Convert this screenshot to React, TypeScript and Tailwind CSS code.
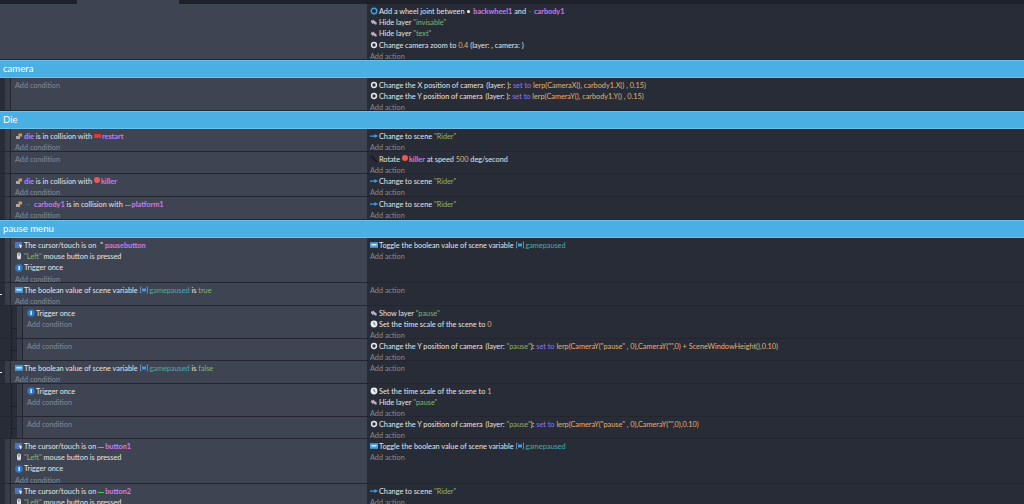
import type { ReactNode } from 'react';

const Obj = ({ children }: { children: ReactNode }) => <span className="font-bold text-[#cb7ce8]">{children}</span>;
const Str = ({ children }: { children: ReactNode }) => <span className="text-[#86b56c]">{children}</span>;
const Num = ({ children }: { children: ReactNode }) => <span className="text-[#e2b271]">{children}</span>;
const Op = ({ children }: { children: ReactNode }) => <span className="text-[#9c74e6]">{children}</span>;
const Var = ({ children }: { children: ReactNode }) => <span className="text-[#4aa9b8]">{children}</span>;

type IconName = 'wheel' | 'layer' | 'camera' | 'scene' | 'rotate' | 'collide' | 'cursor' | 'mouse' | 'once' | 'bool' | 'time';

function Icon({ name }: { name: IconName }) {
    const box = 'inline-block align-[-1.5px] mr-[1px] w-2 h-2 shrink-0';
    switch (name) {
        case 'wheel':
            return <svg className={box} viewBox="0 0 8 8"><circle cx="4" cy="4" r="2.8" fill="none" stroke="#3f9fe0" strokeWidth="1.4" /></svg>;
        case 'layer':
            return <svg className={box} viewBox="0 0 8 8"><path d="M1 2l3 3-1 1-2-2z" fill="#e6c68a" /><path d="M3 1.5l4 3.5-2 1.5-3-3.5z" fill="#c9a6e8" /><path d="M4 5l3 .5-1 1.5z" fill="#7fc0ea" /></svg>;
        case 'camera':
            return <svg className={box} viewBox="0 0 8 8"><circle cx="4" cy="4" r="2.4" fill="none" stroke="#e6e8ec" strokeWidth="1.5" /><circle cx="4" cy="4" r=".8" fill="#444" /></svg>;
        case 'scene':
            return <svg className={box} viewBox="0 0 8 8"><path d="M0 3.4h4.5V2L8 4 4.5 6V4.7H0z" fill="#3f9be8" /></svg>;
        case 'rotate':
            return <svg className={box} viewBox="0 0 8 8"><path d="M1 1l6 6" stroke="#11141a" strokeWidth="1.3" /></svg>;
        case 'collide':
            return <svg className={box} viewBox="0 0 8 8"><rect x="1" y="4" width="4" height="3" fill="#a9a9a9" /><rect x="3.5" y="1.5" width="3.5" height="3" fill="#d49a4c" /></svg>;
        case 'cursor':
            return <svg className={box} viewBox="0 0 8 8"><rect x="0" y="1" width="7" height="6" fill="#4a78c0" /><path d="M4 3l3.5 2-1.5.5L5.5 7.5z" fill="#fff" /></svg>;
        case 'mouse':
            return <svg className={box} viewBox="0 0 8 8"><rect x="2" y="0.5" width="4" height="7" rx="1.8" fill="#d5d7da" /><rect x="3.5" y="1.5" width="1" height="2" fill="#555" /></svg>;
        case 'once':
            return <svg className={box} viewBox="0 0 8 8"><circle cx="4" cy="4" r="3.8" fill="#2f78c4" /><rect x="3.5" y="2" width="1.3" height="4" fill="#fff" /></svg>;
        case 'bool':
            return <svg className={box} viewBox="0 0 8 8"><rect x="0" y="1.2" width="8" height="5.6" fill="#4a9fe0" /><rect x="1.5" y="3" width="5" height="1.5" fill="#d5ecfa" /></svg>;
        case 'time':
            return <svg className={box} viewBox="0 0 8 8"><circle cx="4" cy="4" r="3.4" fill="#eceef0" /><path d="M4 2v2l1.5 1" stroke="#444" strokeWidth=".8" fill="none" /></svg>;
    }
}

const Sprite = ({ className }: { className: string }) => <span className={`inline-block align-[1px] ${className}`} />;

function VarIcon() {
    return (
        <svg className="inline-block align-[-1.5px] mx-[1px] w-2 h-2" viewBox="0 0 8 8">
            <path d="M1.5 1H.5v6h1M6.5 1h1v6h-1" stroke="#7fa8cc" strokeWidth=".7" fill="none" />
            <rect x="2" y="2.5" width="4" height="3" fill="#3f9be8" />
        </svg>
    );
}

function Line({ icon, children }: { icon: IconName; children: ReactNode }) {
    return (
        <div className="h-[11.4px] whitespace-nowrap text-[#e2e4e8]">
            <Icon name={icon} />
            {children}
        </div>
    );
}

const AddLine = ({ label }: { label: string }) => <div className="h-[11px] whitespace-nowrap text-[#858a95]">{label}</div>;

function EventRow({ h, depth = 0, conditions, actions, top = false, tick = false }: {
    h: number;
    depth?: 0 | 1;
    conditions?: ReactNode;
    actions?: ReactNode;
    top?: boolean;
    tick?: boolean;
}) {
    return (
        <div className="flex border-b border-[#23262e]" style={{ height: h }}>
            {top ? (
                <div className="w-[367px] shrink-0 bg-[#3f4452]" />
            ) : (
                <div className="w-[367px] shrink-0 flex bg-[#282c36]">
                    <div className={depth ? 'w-[17px] shrink-0 relative' : 'w-[5px] shrink-0 relative'}>
                        {tick && <div className="absolute left-0 top-[11px] w-[2px] h-px bg-white" />}
                        {depth === 1 && (
                            <>
                                <div className="absolute left-[11px] top-0 bottom-0 w-px bg-[#1c1f26]" />
                                <div className="absolute left-[11px] right-0 bottom-[9px] h-px bg-[#1c1f26]" />
                            </>
                        )}
                    </div>
                    <div className="w-[6px] shrink-0 bg-[#383d4a] border-r border-[#23262e]" />
                    <div className="flex-1 bg-[#3f4452] pl-[4px] pt-[1.5px]">
                        {conditions}
                        <AddLine label="Add condition" />
                    </div>
                </div>
            )}
            <div className="flex-1 bg-[#282c36] pl-[3px] pt-[1.5px]">
                {actions}
                <AddLine label="Add action" />
            </div>
        </div>
    );
}

const Group = ({ title }: { title: string }) => (
    <div className="h-[18px] bg-[#4ab0e4] border-y border-[#6cc2ec] pl-[3px] text-[9.6px] leading-[16px] text-white">{title}</div>
);

const Collide = ({ first, rest }: { first: ReactNode; rest: ReactNode }) => (
    <Line icon="collide">{first} is in collision with {rest}</Line>
);

const Mouse = () => <Line icon="mouse"><Str>"Left"</Str> mouse button is pressed</Line>;
const Once = () => <Line icon="once">Trigger once</Line>;
const Toggle = () => <Line icon="bool">Toggle the boolean value of scene variable <VarIcon /><Var>gamepaused</Var></Line>;
const Rider = () => <Line icon="scene">Change to scene <Str>"Rider"</Str></Line>;
const Bool = ({ value }: { value: string }) => (
    <Line icon="bool">The boolean value of scene variable <VarIcon /><Var>gamepaused</Var> is <Str>{value}</Str></Line>
);
const Cursor = ({ sprite, name }: { sprite: ReactNode; name: string }) => (
    <Line icon="cursor">The cursor/touch is on {sprite}<Obj>{name}</Obj></Line>
);

const greenBar = <Sprite className="w-[6px] h-px bg-[#4cc85a] mr-[1px]" />;
const redBall = <Sprite className="w-[6px] h-[6px] rounded-full bg-[#f0574e] mr-[1px] align-[-0.5px]" />;

export default function App() {
    return (
        <div className="w-[1024px] h-[504px] overflow-hidden bg-[#282c36] text-[7.3px] leading-[11.4px]" style={{ fontFamily: '"Lato", "Noto Sans", sans-serif' }}>
            <div className="h-[4px] flex bg-[#1e2129]">
                <div className="ml-[77px] w-[102px] bg-[#3f4452]" />
            </div>
            <EventRow
                top
                h={56}
                actions={
                    <>
                        <Line icon="wheel">Add a wheel joint between <Sprite className="w-[3px] h-[3px] rounded-full bg-white mx-[1px]" /> <Obj>backwheel1</Obj> and <span className="text-[#3f6f8a]">~</span> <Obj>carbody1</Obj></Line>
                        <Line icon="layer">Hide layer <Str>"invisable"</Str></Line>
                        <Line icon="layer">Hide layer <Str>"text"</Str></Line>
                        <Line icon="camera">Change camera zoom to <Num>0.4</Num> (layer: , camera: )</Line>
                    </>
                }
            />
            <Group title="camera" />
            <EventRow
                h={33}
                actions={
                    <>
                        <Line icon="camera">Change the X position of camera <span className="ml-[1px]">(layer: ):</span> <Op>set to</Op> <Num>lerp(CameraX(), carbody1.X() , 0.15)</Num></Line>
                        <Line icon="camera">Change the Y position of camera <span className="ml-[1px]">(layer: ):</span> <Op>set to</Op> <Num>lerp(CameraY(), carbody1.Y() , 0.15)</Num></Line>
                    </>
                }
            />
            <Group title="Die" />
            <EventRow h={23} conditions={<Collide first={<Obj>die</Obj>} rest={<><Sprite className="w-[7px] h-[4px] bg-[#d83a34] mr-[1px]" /><Obj>restart</Obj></>} />} actions={<Rider />} />
            <EventRow h={22} actions={<Line icon="rotate">Rotate {redBall}<Obj>killer</Obj> at speed <Num>500</Num> deg/second</Line>} />
            <EventRow h={23} conditions={<Collide first={<Obj>die</Obj>} rest={<>{redBall}<Obj>killer</Obj></>} />} actions={<Rider />} />
            <EventRow h={23} conditions={<Collide first={<><span className="text-[#3f7f9a] mx-[2px]">~</span> <Obj>carbody1</Obj></>} rest={<><Sprite className="w-[6px] h-px bg-[#b08a4a] mr-[1px]" /><Obj>platform1</Obj></>} />} actions={<Rider />} />
            <Group title="pause menu" />
            <EventRow h={45} conditions={<><Cursor sprite={<span className="text-white mx-[2px]">"</span>} name="pausebutton" /><Mouse /><Once /></>} actions={<Toggle />} />
            <EventRow h={23} tick conditions={<Bool value="true" />} />
            <EventRow
                h={33}
                depth={1}
                conditions={<Once />}
                actions={
                    <>
                        <Line icon="layer">Show layer <Str>"pause"</Str></Line>
                        <Line icon="time">Set the time scale of the scene to <Num>0</Num></Line>
                    </>
                }
            />
            <EventRow h={22} depth={1} actions={<Line icon="camera">Change the Y position of camera <span className="ml-[1px]">(layer:</span> <Str>"pause"</Str>): <Op>set to</Op> <Num>lerp(CameraY("pause" , 0),CameraY("",0) + SceneWindowHeight(),0.10)</Num></Line>} />
            <EventRow h={23} tick conditions={<Bool value="false" />} />
            <EventRow
                h={33}
                depth={1}
                conditions={<Once />}
                actions={
                    <>
                        <Line icon="time">Set the time scale of the scene to <Num>1</Num></Line>
                        <Line icon="layer">Hide layer <Str>"pause"</Str></Line>
                    </>
                }
            />
            <EventRow h={22} depth={1} actions={<Line icon="camera">Change the Y position of camera <span className="ml-[1px]">(layer:</span> <Str>"pause"</Str>): <Op>set to</Op> <Num>lerp(CameraY("pause" , 0),CameraY("",0),0.10)</Num></Line>} />
            <EventRow h={45} conditions={<><Cursor sprite={greenBar} name="button1" /><Mouse /><Once /></>} actions={<Toggle />} />
            <EventRow h={45} conditions={<><Cursor sprite={greenBar} name="button2" /><Mouse /><Once /></>} actions={<Rider />} />
        </div>
    );
}
